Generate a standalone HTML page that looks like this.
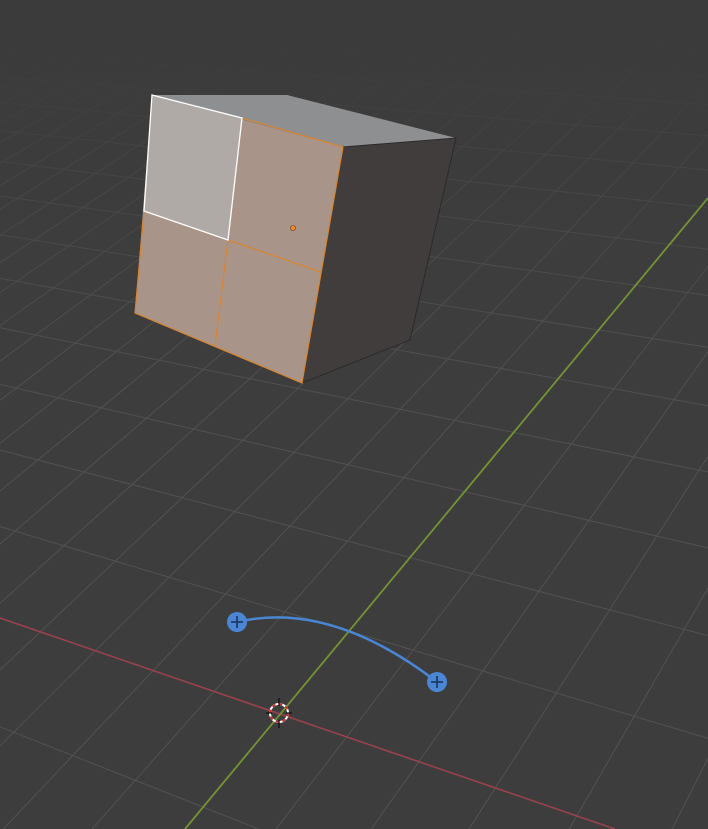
<!DOCTYPE html>
<html><head><meta charset="utf-8"><style>
html,body{margin:0;padding:0;background:#3d3d3d;overflow:hidden;width:708px;height:829px}
svg{display:block;overflow:hidden}
</style></head><body>
<svg id="s" width="708" height="829" viewBox="0 0 708 829" xmlns="http://www.w3.org/2000/svg">
<defs>
<linearGradient id="fade" x1="0" y1="0" x2="0" y2="1">
<stop offset="0" stop-color="#3b3b3b" stop-opacity="1"/>
<stop offset="0.07" stop-color="#3b3b3b" stop-opacity="0.95"/>
<stop offset="0.22" stop-color="#3c3c3c" stop-opacity="0.55"/>
<stop offset="0.4" stop-color="#3d3d3d" stop-opacity="0.15"/>
<stop offset="0.55" stop-color="#3d3d3d" stop-opacity="0"/>
</linearGradient>
<clipPath id="c"><rect width="708" height="829"/></clipPath>
</defs>
<g clip-path="url(#c)">
<rect width="708" height="829" fill="#3d3d3d"/>
<g id="grid" stroke="#525252" stroke-width="1" fill="none"></g>
<rect width="708" height="829" fill="url(#fade)"/>
<line x1="0" y1="618" x2="615" y2="829" stroke="#9a424c" stroke-width="1.6"/>
<line x1="185" y1="829" x2="708" y2="198" stroke="#739432" stroke-width="1.8"/>
<polygon points="152,95 287,95 456,138 343,147" fill="#8e8f91"/>
<polygon points="343,147 456,138 410,340 302,383" fill="#413d3c" stroke="#2a2a2a" stroke-width="1"/>
<polygon points="152,95 343,147 302,383 135,313" fill="#a89488"/>
<polygon points="152,95 242,118 228,240 144,211" fill="#b0aaa6"/>
<g stroke="#d9852f" stroke-width="1.2" fill="none">
<polyline points="343,147 302,383 135,313 144,211"/>
<polyline points="242,118 343,147"/>
<polyline points="228,240 215,346"/>
<polyline points="228,240 321,272"/>
</g>
<g stroke="#ffffff" stroke-width="1.3" fill="none">
<polygon points="152,95 242,118 228,240 144,211"/>
</g>
<circle cx="293" cy="228" r="2.5" fill="#f08c28" stroke="#6a3a10" stroke-width="0.6"/>
<path d="M237,622 Q330,600 437,682" stroke="#4a86d4" stroke-width="2.5" fill="none"/>
<circle cx="237" cy="622" r="10" fill="#4a86d4"/>
<path d="M237,616v12M231,622h12" stroke="#1d3a66" stroke-width="1.8"/>
<circle cx="437" cy="682" r="10" fill="#4a86d4"/>
<path d="M437,676v12M431,682h12" stroke="#1d3a66" stroke-width="1.8"/>
<circle cx="279" cy="713" r="9" fill="none" stroke="#ffffff" stroke-width="2"/>
<circle cx="279" cy="713" r="9" fill="none" stroke="#c8302e" stroke-width="2" stroke-dasharray="3.5 3.5"/>
<path d="M279,698v8M279,720v8M266,713h6M286,713h6" stroke="#111" stroke-width="1.3"/>
</g>
</svg>
<script>
(function(){
var O=[279,713],VX=[-2086,-97],VY=[1450,-701];
var wx=0.028,wy=0.062;
function P(u,v){var w=wx*u+wy*v+1;return [(wx*u*VX[0]+wy*v*VY[0]+O[0])/w,(wx*u*VX[1]+wy*v*VY[1]+O[1])/w,w];}
var g=document.getElementById('grid'),h='';
var N=40;
for(var u=-N;u<=N;u++){
  if(u===0)continue;
  var v0=-N,v1=N;
  var lim=(0.12-1-wx*u)/wy; if(v0<lim)v0=lim;
  if(v1<=v0)continue;
  var a=P(u,v0),b=P(u,v1);
  if(a[2]<=0||b[2]<=0)continue;
  h+='<line x1="'+a[0].toFixed(1)+'" y1="'+a[1].toFixed(1)+'" x2="'+b[0].toFixed(1)+'" y2="'+b[1].toFixed(1)+'"/>';
}
for(var v=-N;v<=N;v++){
  if(v===0)continue;
  var u0=-N,u1=N;
  var lim=(0.12-1-wy*v)/wx; if(u0<lim)u0=lim;
  if(u1<=u0)continue;
  var a=P(u0,v),b=P(u1,v);
  if(a[2]<=0||b[2]<=0)continue;
  h+='<line x1="'+a[0].toFixed(1)+'" y1="'+a[1].toFixed(1)+'" x2="'+b[0].toFixed(1)+'" y2="'+b[1].toFixed(1)+'"/>';
}
g.innerHTML=h;
})();
</script>
</body></html>
